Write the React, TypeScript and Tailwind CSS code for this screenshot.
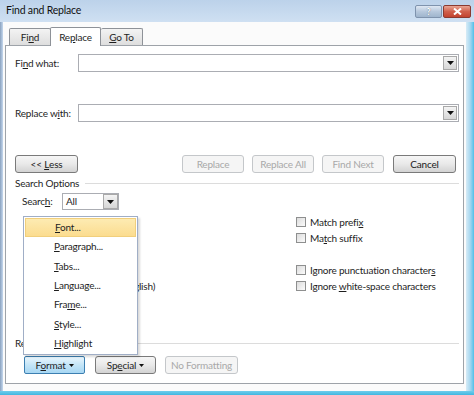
import React from "react";

const U = ({ children }: { children: React.ReactNode }) => (
  <span className="underline underline-offset-[1px] decoration-[1px]">{children}</span>
);

const DropBtn = ({ cls }: { cls: string }) => (
  <div className={"flex items-center justify-center border border-[#a9a9a9] bg-gradient-to-b from-[#f4f4f4] to-[#d6d6d6] " + cls}>
    <svg width="7" height="4" viewBox="0 0 7 4"><path d="M0 0h7L3.5 4z" fill="#111" /></svg>
  </div>
);

const Btn = ({ children, w, disabled, cls = "" }: { children: React.ReactNode; w: string; disabled?: boolean; cls?: string }) => (
  <div
    className={
      "h-[18px] flex items-center justify-center whitespace-pre rounded-[3px] border " +
      w + " " +
      (disabled
        ? "border-[#c4c7ca] bg-[#f5f5f5] text-[#a8a8a8]"
        : "border-[#7a7a7a] bg-gradient-to-b from-[#f6f6f6] via-[#e9e9e9] to-[#d3d3d3] text-[#1a1a1a]") +
      " " + cls
    }
  >
    {children}
  </div>
);

const Check = ({ children }: { children: React.ReactNode }) => (
  <div className="h-[16px] flex items-center whitespace-nowrap">
    <div className="w-[10px] h-[10px] shrink-0 border border-[#8e8f8f] bg-gradient-to-br from-[#dcdcdc] to-[#fbfbfb] mr-[4px]" />
    <span>{children}</span>
  </div>
);

const items: React.ReactNode[] = [
  <><U>F</U>ont...</>,
  <><U>P</U>aragraph...</>,
  <><U>T</U>abs...</>,
  <><U>L</U>anguage...</>,
  <>Fra<U>m</U>e...</>,
  <><U>S</U>tyle...</>,
  <><U>H</U>ighlight</>,
];

export default function App() {
  return (
    <div
      className="w-[474px] h-[395px] flex flex-col bg-[#c5d8ee] text-[10px] tracking-[-0.2px] text-[#1e1e1e] overflow-hidden relative"
      style={{ fontFamily: 'Lato, "Noto Sans", sans-serif' }}
    >
      {/* title bar */}
      <div className="h-[22px] flex items-center bg-gradient-to-b from-[#bcd2ea] to-[#cfe0f2] pl-[6px] pr-[3px]">
        <span className="text-[10.5px] tracking-[-0.2px] text-[#111]">Find and Replace</span>
        <div className="ml-auto flex gap-[1px] self-start mt-[5px]">
          <div className="w-[27px] h-[13px] rounded-[2px] border border-[#7f93ad] bg-gradient-to-b from-[#dfe8f3] via-[#b7c8dc] to-[#9fb5cd] flex items-center justify-center text-[9px] font-bold text-white leading-none" style={{ textShadow: "0 0 1px #44556a" }}>?</div>
          <div className="w-[28px] h-[13px] rounded-[2px] border border-[#8a3a30] bg-gradient-to-b from-[#e8a595] via-[#d0604c] to-[#c2432f] flex items-center justify-center">
            <svg width="9" height="7" viewBox="0 0 9 7"><path d="M1 0.5L8 6.5M8 0.5L1 6.5" stroke="#fff" strokeWidth="2" /></svg>
          </div>
        </div>
      </div>
      <div className="flex flex-1">
        {/* left frame */}
        <div className="w-[3px] bg-gradient-to-r from-[#8aa2bf] to-[#c5d8ee]" />
        {/* body */}
        <div className="w-[463px] bg-[#fbfbfb] flex flex-col pt-[5px] px-[2px] h-[369px]">
          {/* tabs */}
          <div className="h-[19px] flex items-end pl-[4px] relative z-10 -mb-[1px]">
            <div className="w-[42px] h-[17px] border border-[#8e9298] border-b-0 rounded-t-[2px] bg-gradient-to-b from-[#f3f3f3] to-[#dedede] flex items-center justify-center mb-[1px]">
              Fi<U>n</U>d
            </div>
            <div className="w-[51px] h-[19px] border border-[#8e9298] border-b-0 rounded-t-[2px] bg-white flex items-center justify-center -ml-[1px]">
              Re<U>p</U>lace
            </div>
            <div className="w-[42px] h-[17px] border border-[#8e9298] border-b-0 border-l-0 rounded-t-[2px] bg-gradient-to-b from-[#f3f3f3] to-[#dedede] flex items-center justify-center mb-[1px]">
              <U>G</U>o To
            </div>
          </div>
          {/* panel */}
          <div className="h-[339px] border border-[#9ea3a9] bg-white pl-[9px] pr-[4px] flex flex-col relative">
            <div className="mt-[8px] h-[18px] flex items-center">
              <span className="w-[63px]">Fi<U>n</U>d what:</span>
              <div className="flex-1 h-[18px] border border-[#abadb3] flex items-center justify-end pr-[1px]">
                <DropBtn cls="w-[14px] h-[14px]" />
              </div>
            </div>
            <div className="mt-[32px] h-[18px] flex items-center">
              <span className="w-[63px]">Replace w<U>i</U>th:</span>
              <div className="flex-1 h-[18px] border border-[#abadb3] flex items-center justify-end pr-[1px]">
                <DropBtn cls="w-[14px] h-[14px]" />
              </div>
            </div>
            <div className="mt-[33px] h-[18px] flex items-center">
              <Btn w="w-[63px]">{"<< "}<U>L</U>ess</Btn>
              <Btn w="w-[62px]" disabled cls="ml-[104px]">Replace</Btn>
              <Btn w="w-[62px]" disabled cls="ml-[8px]">Replace All</Btn>
              <Btn w="w-[62px]" disabled cls="ml-[8px]">Find Next</Btn>
              <Btn w="w-[63px]" cls="ml-[9px]">Cancel</Btn>
            </div>
            <div className="mt-[3px] h-[14px] flex items-center">
              <span>Search Options</span>
              <div className="flex-1 h-px bg-[#dcdcdc] ml-[6px]" />
            </div>
            <div className="mt-[3px] h-[17px] flex items-center pl-[7px]">
              <span className="w-[40px]">Searc<U>h</U>:</span>
              <div className="w-[57px] h-[17px] border border-[#abadb3] flex items-center">
                <span className="pl-[3px] flex-1">All</span>
                <DropBtn cls="w-[15px] h-[15px]" />
              </div>
            </div>
            <div className="mt-[4px] grid grid-cols-[272px_1fr] pl-[9px]">
              <div className="flex flex-col">
                <Check>Matc<U>h</U> case</Check>
                <Check>Find wh<U>o</U>le words only</Check>
                <Check>Use wildcards</Check>
                <Check>Sounds li<U>k</U>e (English)</Check>
                <Check>Find all <U>w</U>ord forms (English)</Check>
              </div>
              <div className="flex flex-col">
                <Check>Match prefi<U>x</U></Check>
                <Check>Ma<U>t</U>ch suffix</Check>
                <div className="h-[16px]" />
                <Check>Ignore punctuation character<U>s</U></Check>
                <Check>Ignore <U>w</U>hite-space characters</Check>
              </div>
            </div>
            <div className="mt-[42px] h-[14px] flex items-center">
              <span>Replace</span>
              <div className="flex-1 h-px bg-[#dcdcdc] ml-[6px]" />
            </div>
            <div className="mt-[6px] h-[18px] flex items-center pl-[9px]">
              <div className="w-[61px] h-[18px] rounded-[2px] border border-[#3c7fb1] bg-gradient-to-b from-[#eaf6fd] via-[#c4e5f7] to-[#a7d7f3] flex items-center justify-center gap-[3px]">
                <span>F<U>o</U>rmat</span>
                <svg width="5" height="3" viewBox="0 0 5 3"><path d="M0 0h5L2.5 3z" fill="#111" /></svg>
              </div>
              <div className="ml-[10px] w-[61px] h-[18px] rounded-[3px] border border-[#7a7a7a] bg-gradient-to-b from-[#f6f6f6] via-[#e9e9e9] to-[#d3d3d3] flex items-center justify-center gap-[3px]">
                <span>Sp<U>e</U>cial</span>
                <svg width="5" height="3" viewBox="0 0 5 3"><path d="M0 0h5L2.5 3z" fill="#111" /></svg>
              </div>
              <Btn w="w-[73px]" disabled cls="ml-[9px]">No Formatting</Btn>
            </div>

            {/* dropdown menu */}
            <div className="absolute left-[17px] top-[170px] w-[115px] h-[139px] bg-white border border-[#a0aec6] p-[1px] flex flex-col shadow-[2px_2px_2px_rgba(0,0,0,0.15)]">
              {items.map((it, i) => (
                <div
                  key={i}
                  className={
                    "h-[19.5px] flex items-center pl-[29px] " +
                    (i === 0 ? "bg-gradient-to-b from-[#fdebb2] to-[#fbdc8f] border border-[#f1cf7c]" : "")
                  }
                >
                  <span>{it}</span>
                </div>
              ))}
            </div>
          </div>
        </div>
        {/* right frame */}
        <div className="flex-1 bg-gradient-to-r from-[#d6ebf6] via-[#a9d8f0] to-[#4cc0e8]" />
      </div>
      <div className="h-[4px] bg-gradient-to-b from-[#6fcdec] to-[#3fb7e0]" />
    </div>
  );
}
